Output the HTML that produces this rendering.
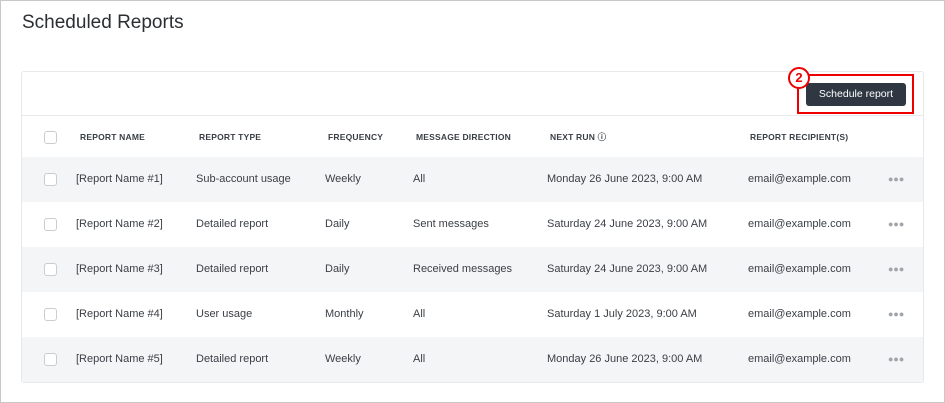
<!DOCTYPE html>
<html><head><style>
body{margin:0;width:945px;height:403px;overflow:hidden;font-family:"Liberation Sans",sans-serif;background:#fff;position:relative}
.frame{position:absolute;left:0;top:0;width:943px;height:401px;border:1px solid #c8c8c8}
h1{position:absolute;left:22px;top:12px;margin:0;font-weight:400;font-size:19px;color:#2b2f33}
.card{position:absolute;left:21px;top:71px;width:901px;height:310px;border:1px solid #e6e8eb;border-radius:3px}
.btn{position:absolute;left:806px;top:83px;width:100px;height:23px;background:#2f3842;border-radius:3px;color:#fff;font-size:10.5px;line-height:23px;text-align:center}
.red{position:absolute;left:797px;top:74px;width:113px;height:36px;border:2px solid #e00}
.circ{position:absolute;left:788px;top:67px;width:18px;height:18px;border:2px solid #e00;border-radius:50%;background:#fff;color:#e00;font-size:13px;font-weight:bold;text-align:center;line-height:18px}
.row{position:absolute;left:22px;width:901px;height:45px;font-size:11px;color:#3a3f45}
.row.g{background:#f4f5f7}
.row span{position:absolute;top:0;line-height:45px;white-space:nowrap}
.hd{top:115px;height:42px;border-top:1px solid #e6e8eb}
.hd span{line-height:42px;font-size:8.5px;font-weight:bold;color:#3a3f45;letter-spacing:.2px}
.cb{position:absolute;left:22px;top:16px;width:11px;height:11px;border:1px solid #c9ccd0;border-radius:3px;background:#fff}
.row span.dots{left:866px;top:0;line-height:45px;color:#a0a5ab;font-size:9px;letter-spacing:0}
</style></head><body>
<div class="frame"></div>
<h1>Scheduled Reports</h1>
<div class="card"></div>
<div class="btn">Schedule report</div>
<div class="red"></div><div class="circ">2</div>
<div class="row hd"><div class="cb" style="top:15px"></div><span style="left:58px">REPORT NAME</span><span style="left:177px">REPORT TYPE</span><span style="left:306px">FREQUENCY</span><span style="left:394px">MESSAGE DIRECTION</span><span style="left:528px">NEXT RUN ⓘ</span><span style="left:728px">REPORT RECIPIENT(S)</span></div>
<div class="row g" style="top:157px"><div class="cb"></div><span style="left:54px">[Report Name #1]</span><span style="left:174px">Sub-account usage</span><span style="left:303px">Weekly</span><span style="left:391px">All</span><span style="left:525px">Monday 26 June 2023, 9:00 AM</span><span style="left:726px">email@example.com</span><span class="dots">●●●</span></div>
<div class="row" style="top:202px"><div class="cb"></div><span style="left:54px">[Report Name #2]</span><span style="left:174px">Detailed report</span><span style="left:303px">Daily</span><span style="left:391px">Sent messages</span><span style="left:525px">Saturday 24 June 2023, 9:00 AM</span><span style="left:726px">email@example.com</span><span class="dots">●●●</span></div>
<div class="row g" style="top:247px"><div class="cb"></div><span style="left:54px">[Report Name #3]</span><span style="left:174px">Detailed report</span><span style="left:303px">Daily</span><span style="left:391px">Received messages</span><span style="left:525px">Saturday 24 June 2023, 9:00 AM</span><span style="left:726px">email@example.com</span><span class="dots">●●●</span></div>
<div class="row" style="top:292px"><div class="cb"></div><span style="left:54px">[Report Name #4]</span><span style="left:174px">User usage</span><span style="left:303px">Monthly</span><span style="left:391px">All</span><span style="left:525px">Saturday 1 July 2023, 9:00 AM</span><span style="left:726px">email@example.com</span><span class="dots">●●●</span></div>
<div class="row g" style="top:337px"><div class="cb"></div><span style="left:54px">[Report Name #5]</span><span style="left:174px">Detailed report</span><span style="left:303px">Weekly</span><span style="left:391px">All</span><span style="left:525px">Monday 26 June 2023, 9:00 AM</span><span style="left:726px">email@example.com</span><span class="dots">●●●</span></div>
</body></html>
